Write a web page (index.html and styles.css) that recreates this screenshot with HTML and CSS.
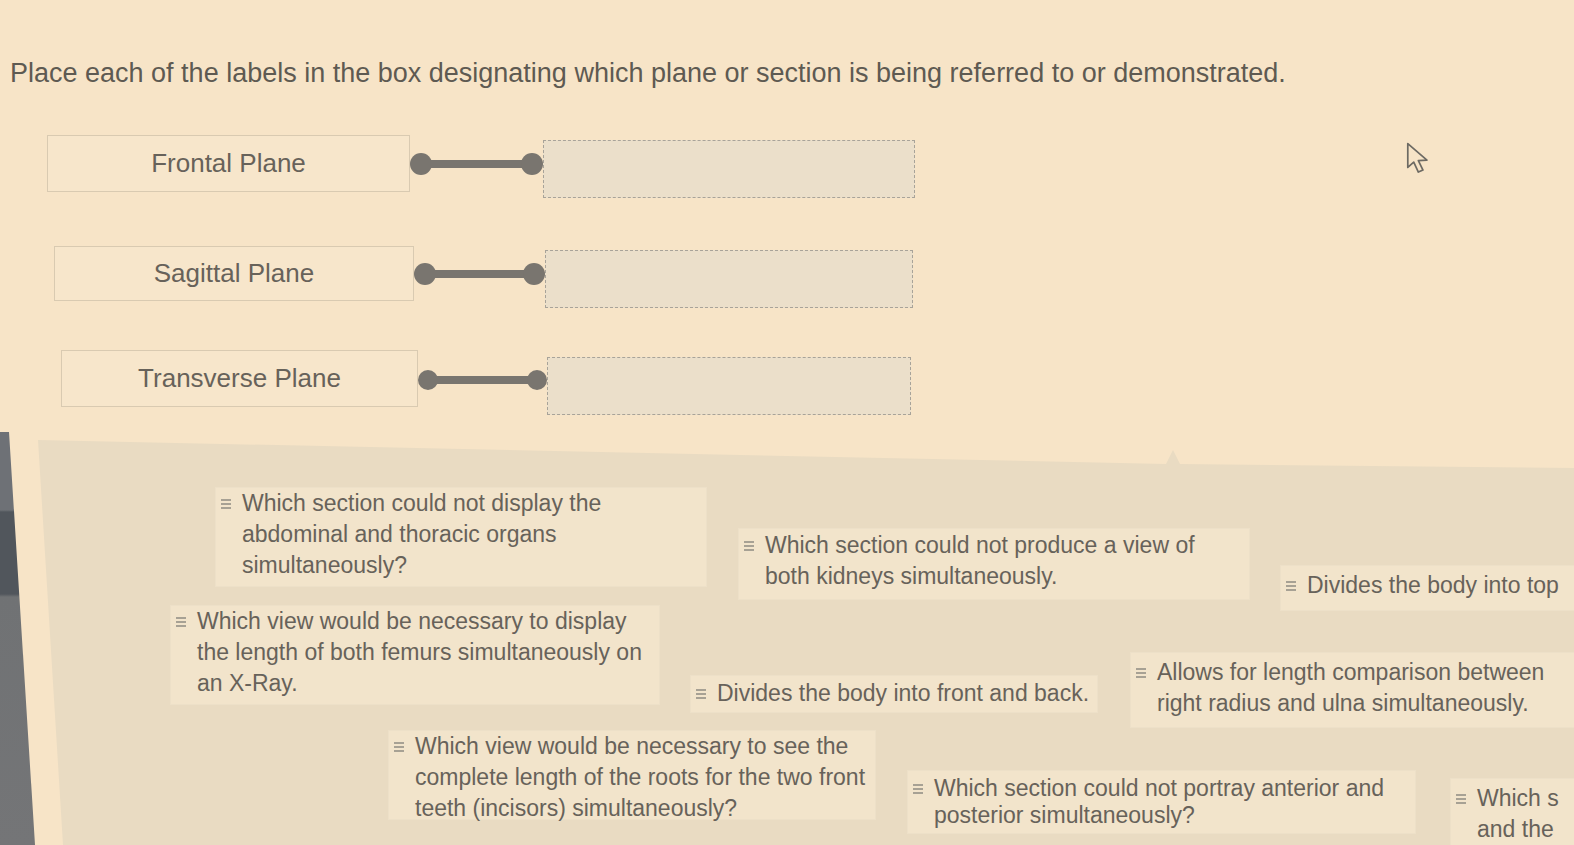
FILE: index.html
```html
<!DOCTYPE html>
<html lang="en">
<head>
<meta charset="utf-8">
<title>Planes and Sections</title>
<link rel="stylesheet" href="styles.css">
</head>
<body>
<div class="edge"></div>
<main class="page">
  <h1 class="prompt">Place each of the labels in the box designating which plane or section is being referred to or demonstrated.</h1>

  <div class="rows">
    <div class="row r1">
      <div class="label">Frontal Plane</div>
      <div class="connector"><span class="dot"></span><span class="bar"></span><span class="dot"></span></div>
      <div class="drop"></div>
    </div>
    <div class="row r2">
      <div class="label">Sagittal Plane</div>
      <div class="connector"><span class="dot"></span><span class="bar"></span><span class="dot"></span></div>
      <div class="drop"></div>
    </div>
    <div class="row r3">
      <div class="label">Transverse Plane</div>
      <div class="connector"><span class="dot"></span><span class="bar"></span><span class="dot"></span></div>
      <div class="drop"></div>
    </div>
  </div>

  <section class="bank">
    <div class="card c1"><svg class="grip" viewBox="0 0 12 12"><path d="M1 2h10M1 6h10M1 10h10"/></svg><p>Which section could not display the<br>abdominal and thoracic organs<br>simultaneously?</p></div>
    <div class="card c2"><svg class="grip" viewBox="0 0 12 12"><path d="M1 2h10M1 6h10M1 10h10"/></svg><p>Which view would be necessary to display<br>the length of both femurs simultaneously on<br>an X-Ray.</p></div>
    <div class="card c3"><svg class="grip" viewBox="0 0 12 12"><path d="M1 2h10M1 6h10M1 10h10"/></svg><p>Which section could not produce a view of<br>both kidneys simultaneously.</p></div>
    <div class="card c4"><svg class="grip" viewBox="0 0 12 12"><path d="M1 2h10M1 6h10M1 10h10"/></svg><p>Divides the body into top</p></div>
    <div class="card c5"><svg class="grip" viewBox="0 0 12 12"><path d="M1 2h10M1 6h10M1 10h10"/></svg><p>Divides the body into front and back.</p></div>
    <div class="card c6"><svg class="grip" viewBox="0 0 12 12"><path d="M1 2h10M1 6h10M1 10h10"/></svg><p>Allows for length comparison between<br>right radius and ulna simultaneously.</p></div>
    <div class="card c7"><svg class="grip" viewBox="0 0 12 12"><path d="M1 2h10M1 6h10M1 10h10"/></svg><p>Which view would be necessary to see the<br>complete length of the roots for the two front<br>teeth (incisors) simultaneously?</p></div>
    <div class="card c8"><svg class="grip" viewBox="0 0 12 12"><path d="M1 2h10M1 6h10M1 10h10"/></svg><p>Which section could not portray anterior and<br>posterior simultaneously?</p></div>
    <div class="card c9"><svg class="grip" viewBox="0 0 12 12"><path d="M1 2h10M1 6h10M1 10h10"/></svg><p>Which s<br>and the</p></div>
  </section>
</main>
<svg class="cursor" viewBox="0 0 24 28"><path d="M2 2 L2 20 L6.5 16 L10 23.5 L13.5 22 L10 14.8 L16.5 14.5 Z"/></svg>
</body>
</html>
```

FILE: styles.css
```css
html, body {
  margin: 0;
  padding: 0;
}
body {
  width: 1574px;
  height: 845px;
  overflow: hidden;
  background: #f7e4c7;
  font-family: "Liberation Sans", Arial, sans-serif;
  color: #67625a;
  position: relative;
}
.page {
  padding: 56px 0 0 10px;
}
.prompt {
  margin: 0;
  font-size: 27px;
  font-weight: normal;
  line-height: 34px;
  color: #5e5a52;
}
.rows {
  margin-top: 45px;
}
.row {
  display: flex;
  align-items: flex-start;
}
.r1 { margin-left: 37px; }
.r2 { margin-left: 44px; margin-top: 48px; }
.r3 { margin-left: 51px; margin-top: 42px; }

.label {
  box-sizing: border-box;
  width: 363px;
  height: 57px;
  border: 1px solid #d9cab1;
  background: #f7e6cb;
  display: flex;
  align-items: center;
  justify-content: center;
  font-size: 26px;
  color: #67625a;
}
.r2 .label { width: 360px; height: 55px; }
.r3 .label { width: 357px; height: 57px; }

.connector {
  display: flex;
  align-items: center;
  width: 133px;
  margin-top: 18px;
}
.r2 .connector { width: 131px; margin-top: 17px; }
.r3 .connector { width: 129px; margin-top: 20px; }
.dot {
  width: 22px;
  height: 22px;
  border-radius: 50%;
  background: #79756f;
  flex: none;
}
.r3 .dot { width: 20px; height: 20px; }
.bar {
  flex: 1;
  height: 8px;
  background: #79756f;
  margin: 0 -2px;
}
.drop {
  box-sizing: border-box;
  width: 372px;
  height: 58px;
  margin-top: 5px;
  border: 1.5px dashed #a8a399;
  background: #ebdfca;
}
.r2 .drop { width: 368px; margin-top: 4px; }
.r3 .drop { width: 364px; margin-top: 7px; }

.bank {
  position: absolute;
  left: 38px;
  top: 440px;
  width: 1536px;
  height: 405px;
  background: #e9dbc2;
  overflow: hidden;
  clip-path: polygon(0 0, 1128px 24px, 1135px 10px, 1142px 24px, 100% 28px, 100% 100%, 25px 100%);
}
.card {
  position: absolute;
  box-sizing: border-box;
  display: flex;
  align-items: flex-start;
  gap: 10px;
  padding: 0 8px 0 4px;
  background: #f2e4cb;
  border: 1px solid #ede0c8;
  font-size: 23px;
  line-height: 31px;
  color: #67625a;
  white-space: nowrap;
}
.card p {
  margin: 0;
}
.grip {
  flex: none;
  width: 12px;
  height: 12px;
  margin-top: 10px;
  fill: none;
  stroke: #8e8a83;
  stroke-width: 1.5;
}
.c1 { left: 177px; top: 47px; width: 492px; height: 100px; }
.c2 { left: 132px; top: 165px; width: 490px; height: 100px; }
.c3 { left: 700px; top: 88px; width: 512px; height: 72px; padding-top: 1px; }
.c4 { left: 1242px; top: 125px; width: 300px; height: 46px; padding-top: 4px; }
.c5 { left: 652px; top: 235px; width: 408px; height: 38px; padding-top: 2px; }
.c6 { left: 1092px; top: 212px; width: 450px; height: 76px; padding-top: 4px; }
.c7 { left: 350px; top: 290px; width: 488px; height: 90px; }
.c8 { left: 869px; top: 330px; width: 509px; height: 64px; padding-top: 4px; line-height: 27px; }
.c9 { left: 1412px; top: 338px; width: 130px; height: 80px; padding-top: 4px; }
.c8 .grip { margin-top: 8px; }

.edge {
  position: absolute;
  left: 0;
  top: 432px;
  width: 36px;
  height: 413px;
  background: linear-gradient(to bottom, #6e7176 0, #6e7176 78px, #51565c 80px, #51565c 162px, #707274 165px, #747577 100%);
  clip-path: polygon(0 0, 9px 0, 35px 100%, 0 100%);
  z-index: 2;
}
.cursor {
  position: absolute;
  left: 1405px;
  top: 141px;
  width: 32px;
  height: 37px;
  fill: none;
  stroke: #6d6a63;
  stroke-width: 1.3;
  stroke-linejoin: round;
}
```
